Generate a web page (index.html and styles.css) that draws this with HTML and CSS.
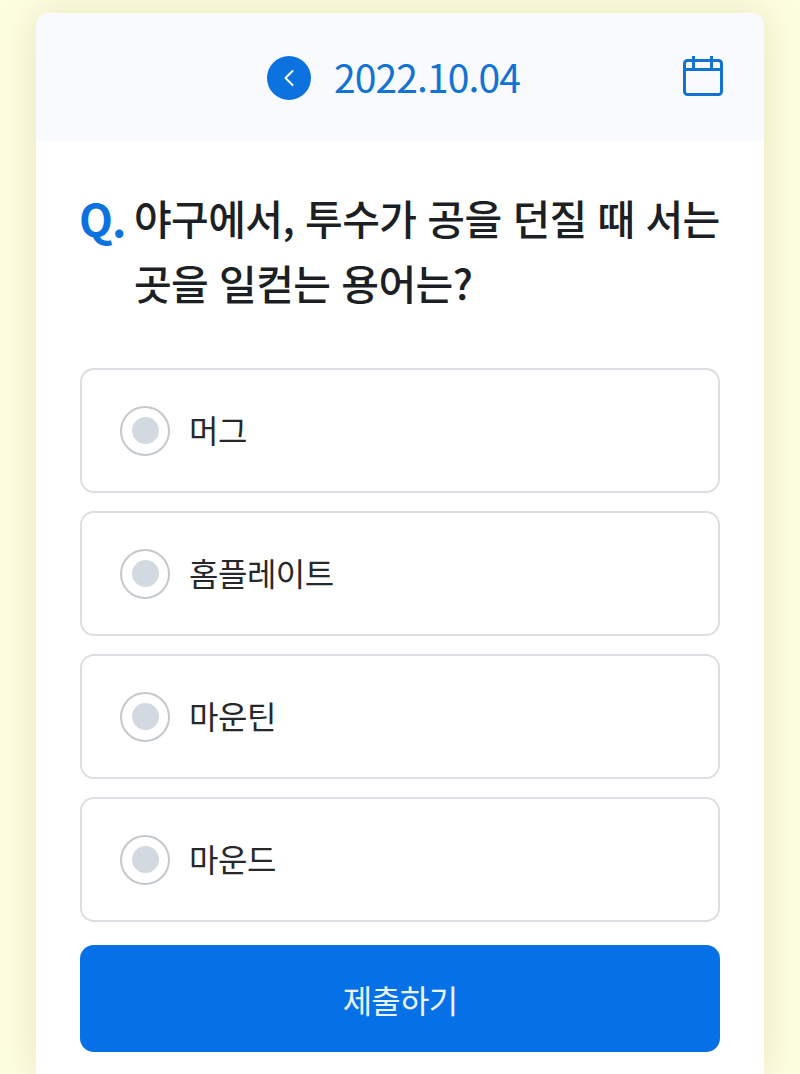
FILE: index.html
```html
<!DOCTYPE html>
<html lang="ko">
<head>
<meta charset="utf-8">
<title>퀴즈</title>
<link rel="stylesheet" href="styles.css">
</head>
<body>
<main class="card">
  <header class="head">
    <div class="date-nav">
      <span class="back">
        <svg viewBox="0 0 44 44" width="44" height="44"><circle cx="22" cy="22" r="22" fill="#0b72e0"/><path d="M25.500 15 L18.500 22 L25.500 29" fill="none" stroke="#fff" stroke-width="2" stroke-linecap="round" stroke-linejoin="round"/></svg>
      </span>
      <span class="date">2022.10.04</span>
    </div>
    <svg class="cal" viewBox="0 0 40 42" width="40" height="42"><rect x="1.500" y="5.500" width="37" height="34" rx="3" fill="none" stroke="#1273d4" stroke-width="3"/><path d="M2 14.500H38M10.500 1V14M28.500 1V14" fill="none" stroke="#1273d4" stroke-width="3"/></svg>
  </header>
  <section class="body">
    <div class="question">
      <span class="q">Q.</span>
      <h1 class="qtext">야구에서, 투수가 공을 던질 때 서는<br>곳을 일컫는 용어는?</h1>
    </div>
    <ul class="opts">
      <li class="opt"><span class="radio"><span class="dot"></span></span><span class="label">머그</span></li>
      <li class="opt"><span class="radio"><span class="dot"></span></span><span class="label">홈플레이트</span></li>
      <li class="opt"><span class="radio"><span class="dot"></span></span><span class="label">마운틴</span></li>
      <li class="opt"><span class="radio"><span class="dot"></span></span><span class="label">마운드</span></li>
    </ul>
    <button class="submit">제출하기</button>
  </section>
</main>
</body>
</html>
```
FILE: styles.css
```css
* { box-sizing: border-box; }
html, body { margin: 0; height: 100%; }
body {
  background: #fdfde0;
  font-family: "Noto Sans CJK KR", "Noto Sans", sans-serif;
  overflow: hidden;
  padding: 13px 36px 0;
}
.card {
  background: #fff;
  border-radius: 12px 12px 0 0;
  height: 1061px;
  box-shadow: 0 0 34px rgba(180, 180, 120, 0.3);
  overflow: hidden;
}
.head {
  height: 128px;
  background: #f8fafd;
  display: flex;
  align-items: center;
  justify-content: center;
  position: relative;
}
.date-nav { display: flex; align-items: center; gap: 23px; margin: 2px 13px 0 0; }
.back { display: flex; }
.date {
  font-size: 39px;
  color: #1273d4;
  letter-spacing: -0.9px;
  line-height: 44px;
  margin-top: -4px;
}
.cal { position: absolute; right: 41px; top: 42px; }
.body { padding: 44px 44px 0; }
.question { display: flex; align-items: flex-start; height: 183px; }
.q {
  font-size: 44px;
  font-weight: 700;
  color: #0b72e0;
  line-height: 66px;
  width: 53px;
  margin-left: -1px;
  margin-right: 2px;
  letter-spacing: -1px;
  flex: none;
}
.qtext {
  margin: 0;
  font-size: 41px;
  font-weight: 500;
  color: #1c1f23;
  line-height: 65px;
  letter-spacing: -0.6px;
  white-space: nowrap;
}
.opts { list-style: none; margin: 0; padding: 0; display: flex; flex-direction: column; gap: 18px; }
.opt {
  height: 125px;
  border: 2px solid #dcdfe3;
  border-radius: 14px;
  display: flex;
  align-items: center;
  padding-left: 38px;
  gap: 19px;
}
.radio {
  width: 50px;
  height: 50px;
  border: 2px solid #c4c9ce;
  border-radius: 50%;
  display: flex;
  align-items: center;
  justify-content: center;
  flex: none;
}
.dot { width: 27px; height: 27px; border-radius: 50%; background: #d3d9e1; }
.label { font-size: 32px; color: #26282b; letter-spacing: -0.5px; line-height: 44px; margin-bottom: 4px; }
.submit {
  display: block;
  width: 100%;
  height: 107px;
  margin-top: 23px;
  border: 0;
  border-radius: 14px;
  background: #0670e6;
  color: #eaf4ff;
  font-family: inherit;
  font-size: 32px;
  letter-spacing: -0.8px;
}
```
